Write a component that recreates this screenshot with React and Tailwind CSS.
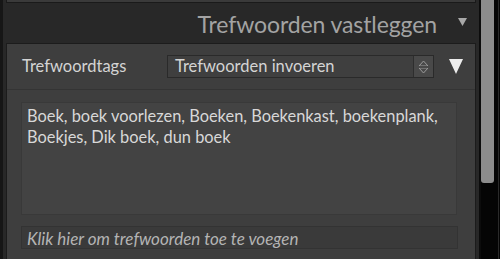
import React from 'react';

export default function App() {
    const font = { fontFamily: '"Lato", "Liberation Sans", sans-serif' };
    return (
        <div className="w-[500px] h-[259px] bg-[#141414] flex flex-row overflow-hidden" style={font}>
            <div className="w-[3px] bg-[#161616]" />
            <div className="w-[476px] h-full bg-[#282828] flex flex-col">
                {/* bottom of previous panel */}
                <div className="mx-[3px] h-[3px] bg-[#3a3a3a] border-x border-b border-[#1a1a1a]" />
                <div className="h-[40px] flex flex-row items-center justify-end pr-[12px]">
                    <span className="text-[23px] text-[#a3a3a3] tracking-[-0.1px] leading-none mt-[2px]">
                        Trefwoorden vastleggen
                    </span>
                    <svg width="9" height="8" viewBox="0 0 9 8" className="ml-[21px] mt-[-2px]">
                        <polygon points="0,0 9,0 4.5,8" fill="#a8a8a8" />
                    </svg>
                </div>
                <div className="flex-1 mx-[3px] bg-[#3e3e3e] border border-[#1c1c1c] border-b-0 flex flex-col">
                    <div className="h-[46px] flex flex-row items-center border-b border-[#343434] pl-[15px]">
                        <span className="text-[16.5px] text-[#d4d4d4] w-[145px]">Trefwoordtags</span>
                        <div className="w-[267px] h-[23px] flex flex-row border border-[#2a2a2a] bg-[#3f3f3f]">
                            <span className="flex-1 pl-[7px] text-[16.5px] text-[#d4d4d4] leading-[21px]">
                                Trefwoorden invoeren
                            </span>
                            <div className="w-[20px] h-full border-l border-[#2e2e2e] bg-[#494949] flex flex-col items-center justify-center gap-[2px]">
                                <svg width="9" height="5" viewBox="0 0 9 5">
                                    <polygon points="4.5,0 9,5 0,5" fill="none" stroke="#9a9a9a" strokeWidth="1" />
                                </svg>
                                <svg width="9" height="5" viewBox="0 0 9 5">
                                    <polygon points="0,0 9,0 4.5,5" fill="none" stroke="#9a9a9a" strokeWidth="1" />
                                </svg>
                            </div>
                        </div>
                        <svg width="14" height="15" viewBox="0 0 14 15" className="ml-[15px]">
                            <polygon points="0,0 14,0 7,15" fill="#ececec" />
                        </svg>
                    </div>
                    <div className="mt-[12px] ml-[14px] w-[436px] h-[113px] bg-[#434343] border border-[#393939] px-[5px] pt-[2px]">
                        <p className="text-[16.4px] leading-[21px] text-[#d8d8d8]">
                            Boek, boek voorlezen, Boeken, Boekenkast, boekenplank, Boekjes, Dik boek, dun boek
                        </p>
                    </div>
                    <div className="mt-[11px] ml-[14px] w-[437px] h-[23px] bg-[#3a3a3a] border border-[#333333] px-[5px]">
                        <span className="text-[17px] italic leading-[21px] text-[#b4b4b4]">
                            Klik hier om trefwoorden toe te voegen
                        </span>
                    </div>
                </div>
            </div>
            <div className="w-[2px] bg-[#0c0c0c]" />
            <div className="w-[13px] h-full bg-[#050505]">
                <div className="h-[183px] bg-[#8c8c8c] rounded-b-[3px]" />
            </div>
            <div className="flex-1 bg-[#050505] flex flex-row justify-end pr-[1px]">
                <div className="w-[1px] h-full bg-[#2a2a2a]" />
            </div>
        </div>
    );
}
